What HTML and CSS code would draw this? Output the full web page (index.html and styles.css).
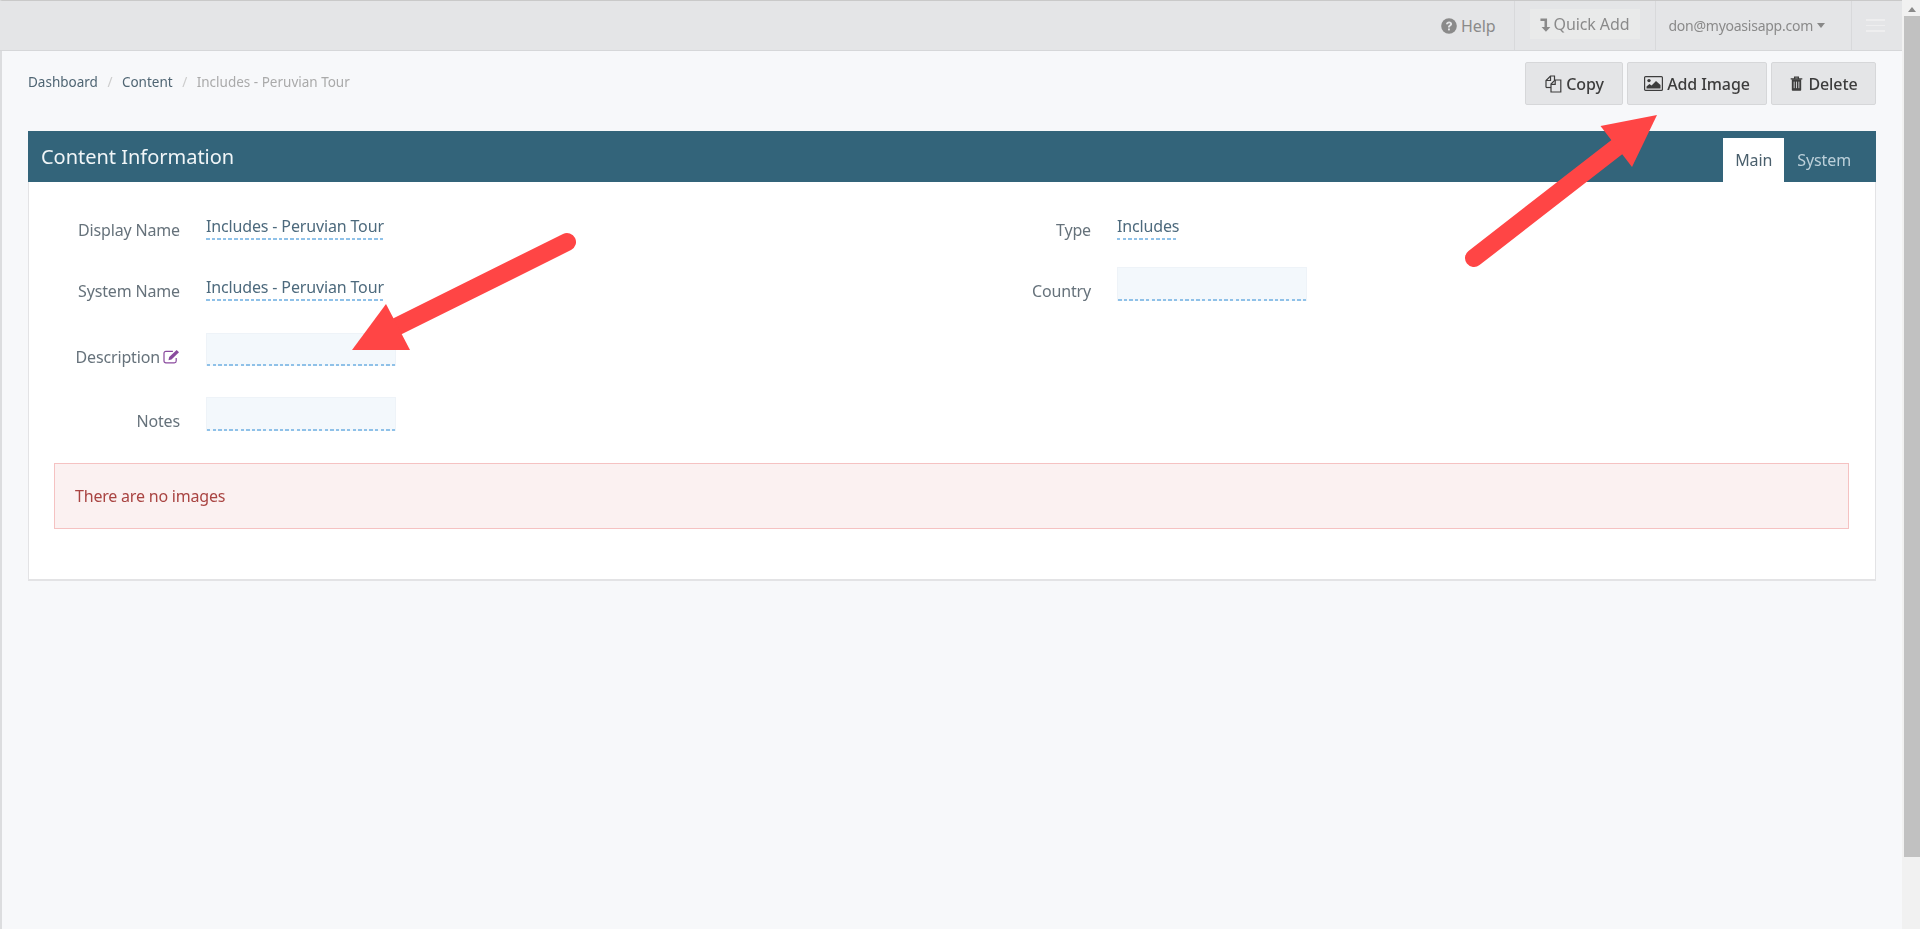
FILE: index.html
```html
<!DOCTYPE html>
<html lang="en">
<head>
<meta charset="utf-8">
<title>Includes - Peruvian Tour</title>
<link rel="stylesheet" href="styles.css">
</head>
<body>
<div class="app">
  <header class="topbar">
    <a class="nav-item nav-help">
      <svg class="ico ico-help" viewBox="0 0 16 16"><circle cx="8" cy="8" r="7.8" fill="currentColor"/><path d="M5 6.200c.2-1.700 1.500-2.700 3.100-2.700 1.700 0 3 1.100 3 2.500 0 1.100-.7 1.700-1.500 2.200-.6.400-.8.700-.8 1.300H7c0-1.200.4-1.900 1.200-2.400.6-.4.900-.6.900-1.100 0-.5-.5-.8-1-.8-.6 0-1 .4-1.100 1z" fill="#e4e5e7"/><rect x="7" y="10.500" width="1.900" height="1.900" fill="#e4e5e7"/></svg>
      Help
    </a>
    <a class="nav-item nav-quick">
      <span class="quick-box">
        <svg class="ico ico-down" viewBox="0 0 12 16"><path d="M.5 1.500h7.200v9.300H11.300L6.500 15.800 1.700 10.800h3.200V4.200H.5z" fill="currentColor"/></svg>
        Quick Add
      </span>
    </a>
    <a class="nav-item nav-user">don@myoasisapp.com<span class="caret"></span></a>
    <a class="nav-item nav-menu"><span class="bars"><i></i><i></i><i></i></span></a>
  </header>

  <main class="content">
    <div class="page-head">
      <nav class="crumbs">
        <a>Dashboard</a><span class="sep">/</span><a>Content</a><span class="sep">/</span><span class="current">Includes - Peruvian Tour</span>
      </nav>
      <div class="actions">
        <button class="btn btn-copy">
          <svg class="ico ico-copy" viewBox="0 0 18 18"><path d="M2 12.500V5.500L6.500 1H10.500V5" fill="none" stroke="currentColor" stroke-width="1.200"/><path d="M2 5.500h4.500V1" fill="none" stroke="currentColor" stroke-width="1.200"/><path d="M2 12.500h5" fill="none" stroke="currentColor" stroke-width="1.200"/><path d="M11 5h5.800v12H7V9z" fill="none" stroke="currentColor" stroke-width="1.200"/><path d="M7 9.300h4.200V5" fill="none" stroke="currentColor" stroke-width="1.200"/></svg>
          Copy
        </button>
        <button class="btn btn-image">
          <svg class="ico ico-wide" viewBox="0 0 19 15"><rect x=".6" y=".6" width="17.800" height="13.800" rx="1" fill="none" stroke="currentColor" stroke-width="1.200"/><circle cx="5" cy="4.600" r="1.700" fill="currentColor"/><path d="M2.500 12.500v-2l3-2.500 2 1.500L12 5l4.500 4v3.500z" fill="currentColor"/></svg>
          Add Image
        </button>
        <button class="btn btn-delete">
          <svg class="ico" viewBox="0 0 14 16"><path d="M5 2.500V1.200h4v1.300M.8 3h12.400" fill="none" stroke="currentColor" stroke-width="1.400"/><path d="M2 3.500h10v11.300a.8.8 0 0 1-.8.800H2.800a.8.8 0 0 1-.8-.8z" fill="currentColor"/><path d="M4.500 6v7M7 6v7M9.500 6v7" stroke="#e4e5e7" stroke-width=".9"/></svg>
          Delete
        </button>
      </div>
    </div>

    <section class="panel">
      <div class="panel-head">
        <h2 class="panel-title">Content Information</h2>
        <div class="tabs">
          <a class="tab tab-active">Main</a>
          <a class="tab">System</a>
        </div>
      </div>
      <div class="panel-body">
        <div class="form">
          <div class="form-col form-col-left">
            <div class="field">
              <label class="field-label">Display Name</label>
              <span class="field-value">Includes - Peruvian Tour</span>
            </div>
            <div class="field">
              <label class="field-label">System Name</label>
              <span class="field-value">Includes - Peruvian Tour</span>
            </div>
            <div class="field field-low">
              <label class="field-label">Description<svg class="ico ico-edit" viewBox="0 0 18 16"><path d="M14 9.500v3.200a2 2 0 0 1-2 2H3a2 2 0 0 1-2-2V4.500a2 2 0 0 1 2-2h7.500" fill="none" stroke="currentColor" stroke-width="1.300"/><path d="M6.500 8.500 14.500 1l2.500 2.500-8 7.800-3.200.6z" fill="currentColor"/></svg></label>
              <span class="field-empty"></span>
            </div>
            <div class="field">
              <label class="field-label">Notes</label>
              <span class="field-empty"></span>
            </div>
          </div>
          <div class="form-col">
            <div class="field">
              <label class="field-label">Type</label>
              <span class="field-value">Includes</span>
            </div>
            <div class="field">
              <label class="field-label">Country</label>
              <span class="field-empty"></span>
            </div>
          </div>
        </div>
        <div class="alert">There are no images</div>
      </div>
    </section>
  </main>

  <div class="scrollbar">
    <span class="scroll-arrow"></span>
    <span class="scroll-thumb"></span>
  </div>
</div>

<svg class="annotations" viewBox="0 0 1920 929" aria-hidden="true">
  <g fill="#ff4545" stroke="none">
    <line x1="567" y1="242" x2="396" y2="327" stroke="#ff4545" stroke-width="18" stroke-linecap="round"/>
    <polygon points="352,350 386,304 410,350"/>
    <line x1="1474" y1="258" x2="1617" y2="147" stroke="#ff4545" stroke-width="18" stroke-linecap="round"/>
    <polygon points="1657,115 1600.500,126 1632,167"/>
  </g>
</svg>
</body>
</html>
```
FILE: styles.css
```css
* { box-sizing: border-box; }
html, body { margin: 0; height: 100%; overflow: hidden; }
body {
  font-family: "Noto Sans", "Liberation Sans", sans-serif;
  font-size: 14px;
  color: #555;
  background: #f7f8fa;
}
.app {
  display: grid;
  grid-template-columns: 1fr 18px;
  grid-template-rows: 50px 1fr;
  height: 929px;
  border-top: 1px solid #c9c9c9;
  border-left: 2px solid #dcdddf;
  filter: blur(.3px);
}
.topbar {
  grid-column: 1;
  grid-row: 1;
  display: flex;
  justify-content: flex-end;
  align-items: stretch;
  background: #e4e5e7;
  border-bottom: 1px solid #d6d7d9;
  color: #8a8a8a;
  margin-left: -2px;
}
.nav-item {
  display: flex;
  align-items: center;
  border-right: 1px solid #d8d9db;
}
.nav-help { padding-right: 18px; gap: 4px; font-size: 16px; letter-spacing: -.1px; }
.nav-quick { padding: 0 15px 3px 15px; font-size: 16px; letter-spacing: -.1px; }
.quick-box {
  display: flex;
  align-items: center;
  justify-content: center;
  gap: 3px;
  width: 110px;
  height: 30px;
  background: #e9eaea;
}
.nav-user { width: 196.500px; padding: 0 0 0 13px; font-size: 14px; letter-spacing: -.25px; }
.nav-menu { width: 50px; padding-left: 14px; border-right: 0; }
.bars { display: flex; flex-direction: column; gap: 4px; width: 19px; }
.bars i { display: block; height: 1.500px; background: #eeeeef; }
.caret {
  width: 0; height: 0;
  margin-left: 4px;
  border: 4.500px solid transparent;
  border-top: 5px solid #888;
  border-bottom: 0;
}
.ico { width: 15px; height: 15px; flex: none; }
.ico-help { width: 16px; height: 16px; }
.ico-copy { width: 18px; height: 18px; }
.ico-down { width: 11px; }
.ico-wide { width: 19px; }

.content { grid-column: 1; grid-row: 2; padding: 11px 26px 0; min-width: 0; }
.page-head { display: flex; justify-content: space-between; align-items: flex-start; height: 69px; }
.crumbs { display: flex; align-items: center; height: 47px; padding-bottom: 7px; font-size: 13.500px; color: #4f6573; }
.sep { margin: 0 9.500px; color: #ccc; }
.current { color: #aaa; }
.actions { display: flex; gap: 4px; }
.btn {
  display: flex;
  align-items: center;
  justify-content: center;
  gap: 4px;
  height: 43px;
  padding: 0;
  font: inherit;
  font-size: 16px;
  letter-spacing: -.1px;
  font-weight: 500;
  color: #3d3d3d;
  background: #e4e5e7;
  border: 1px solid #d6d7d9;
  border-radius: 2px;
}
.btn-copy { width: 98px; }
.btn-image { width: 140px; }
.btn-delete { width: 105px; }

.panel { background: #fff; border: 1px solid #e3e3e5; border-top: 0; border-bottom-width: 2px; height: 450px; }
.panel-head {
  display: flex;
  justify-content: space-between;
  align-items: flex-end;
  height: 51px;
  margin: 0 -1px;
  padding: 0 12px 0 13px;
  background: #33647a;
}
.panel-title { align-self: center; margin: 0; font-size: 20px; font-weight: 400; letter-spacing: -.02px; color: #f0f5f7; }
.tabs { display: flex; align-items: stretch; height: 44px; }
.tab { display: flex; align-items: center; padding: 0 13px; font-size: 16px; letter-spacing: -.1px; color: #bcd0da; }
.tab-active { width: 61px; justify-content: center; padding: 0; background: #fff; color: #4a5f6c; }

.panel-body { padding: 24px 26px 0 25px; }
.form { display: flex; }
.form-col { display: flex; flex-direction: column; gap: 27px; }
.form-col-left { width: 911px; }
.field { display: flex; gap: 26px; height: 34px; }
.field-low { margin-top: 5px; height: 33px; }
.field-low .field-empty { height: 33px; }
.field-low + .field { margin-top: 4px; }
.field-label {
  display: flex;
  align-items: center;
  justify-content: flex-end;
  gap: 3px;
  width: 126px;
  height: 34px;
  padding-top: 13px;
  font-size: 16px;
  letter-spacing: -.15px;
  color: #66727b;
}
.field-value {
  align-self: flex-end;
  height: 34px;
  padding-top: 8px;
  font-size: 16px;
  letter-spacing: -.15px;
  line-height: 24px;
  color: #4d6a7d;
  background: repeating-linear-gradient(90deg, #8fc1e8 0 3.500px, transparent 3.500px 5.600px) left bottom / 100% 2px no-repeat;
}
.field-empty {
  width: 190px;
  height: 34px;
  border: 1px solid #eef3f8;
  border-bottom: 0;
  background:
    repeating-linear-gradient(90deg, #8fc1e8 0 3.500px, transparent 3.500px 5.600px) left bottom / 100% 2px no-repeat,
    #f3f8fc;
}
.ico-edit { width: 17px; height: 15px; color: #8a4a9e; }
.alert {
  display: flex;
  align-items: center;
  height: 66px;
  margin-top: 32px;
  padding-left: 20px;
  font-size: 16px;
  letter-spacing: -.2px;
  color: #a94442;
  background: #fbf1f1;
  border: 1px solid #f5c2c2;
}

.scrollbar {
  grid-column: 2;
  grid-row: 1 / 3;
  display: flex;
  flex-direction: column;
  align-items: center;
  background: #f1f1f1;
  margin-top: -1px;
  padding-left: 1px;
}
.scroll-arrow {
  width: 0; height: 0;
  margin: 7px 0 4px;
  border: 4.500px solid transparent;
  border-bottom: 5px solid #8a8a8a;
  border-top: 0;
}
.scroll-thumb { width: 16px; height: 841px; background: #c1c1c1; }

.annotations { position: absolute; left: 0; top: 0; width: 1920px; height: 929px; pointer-events: none; }
```
